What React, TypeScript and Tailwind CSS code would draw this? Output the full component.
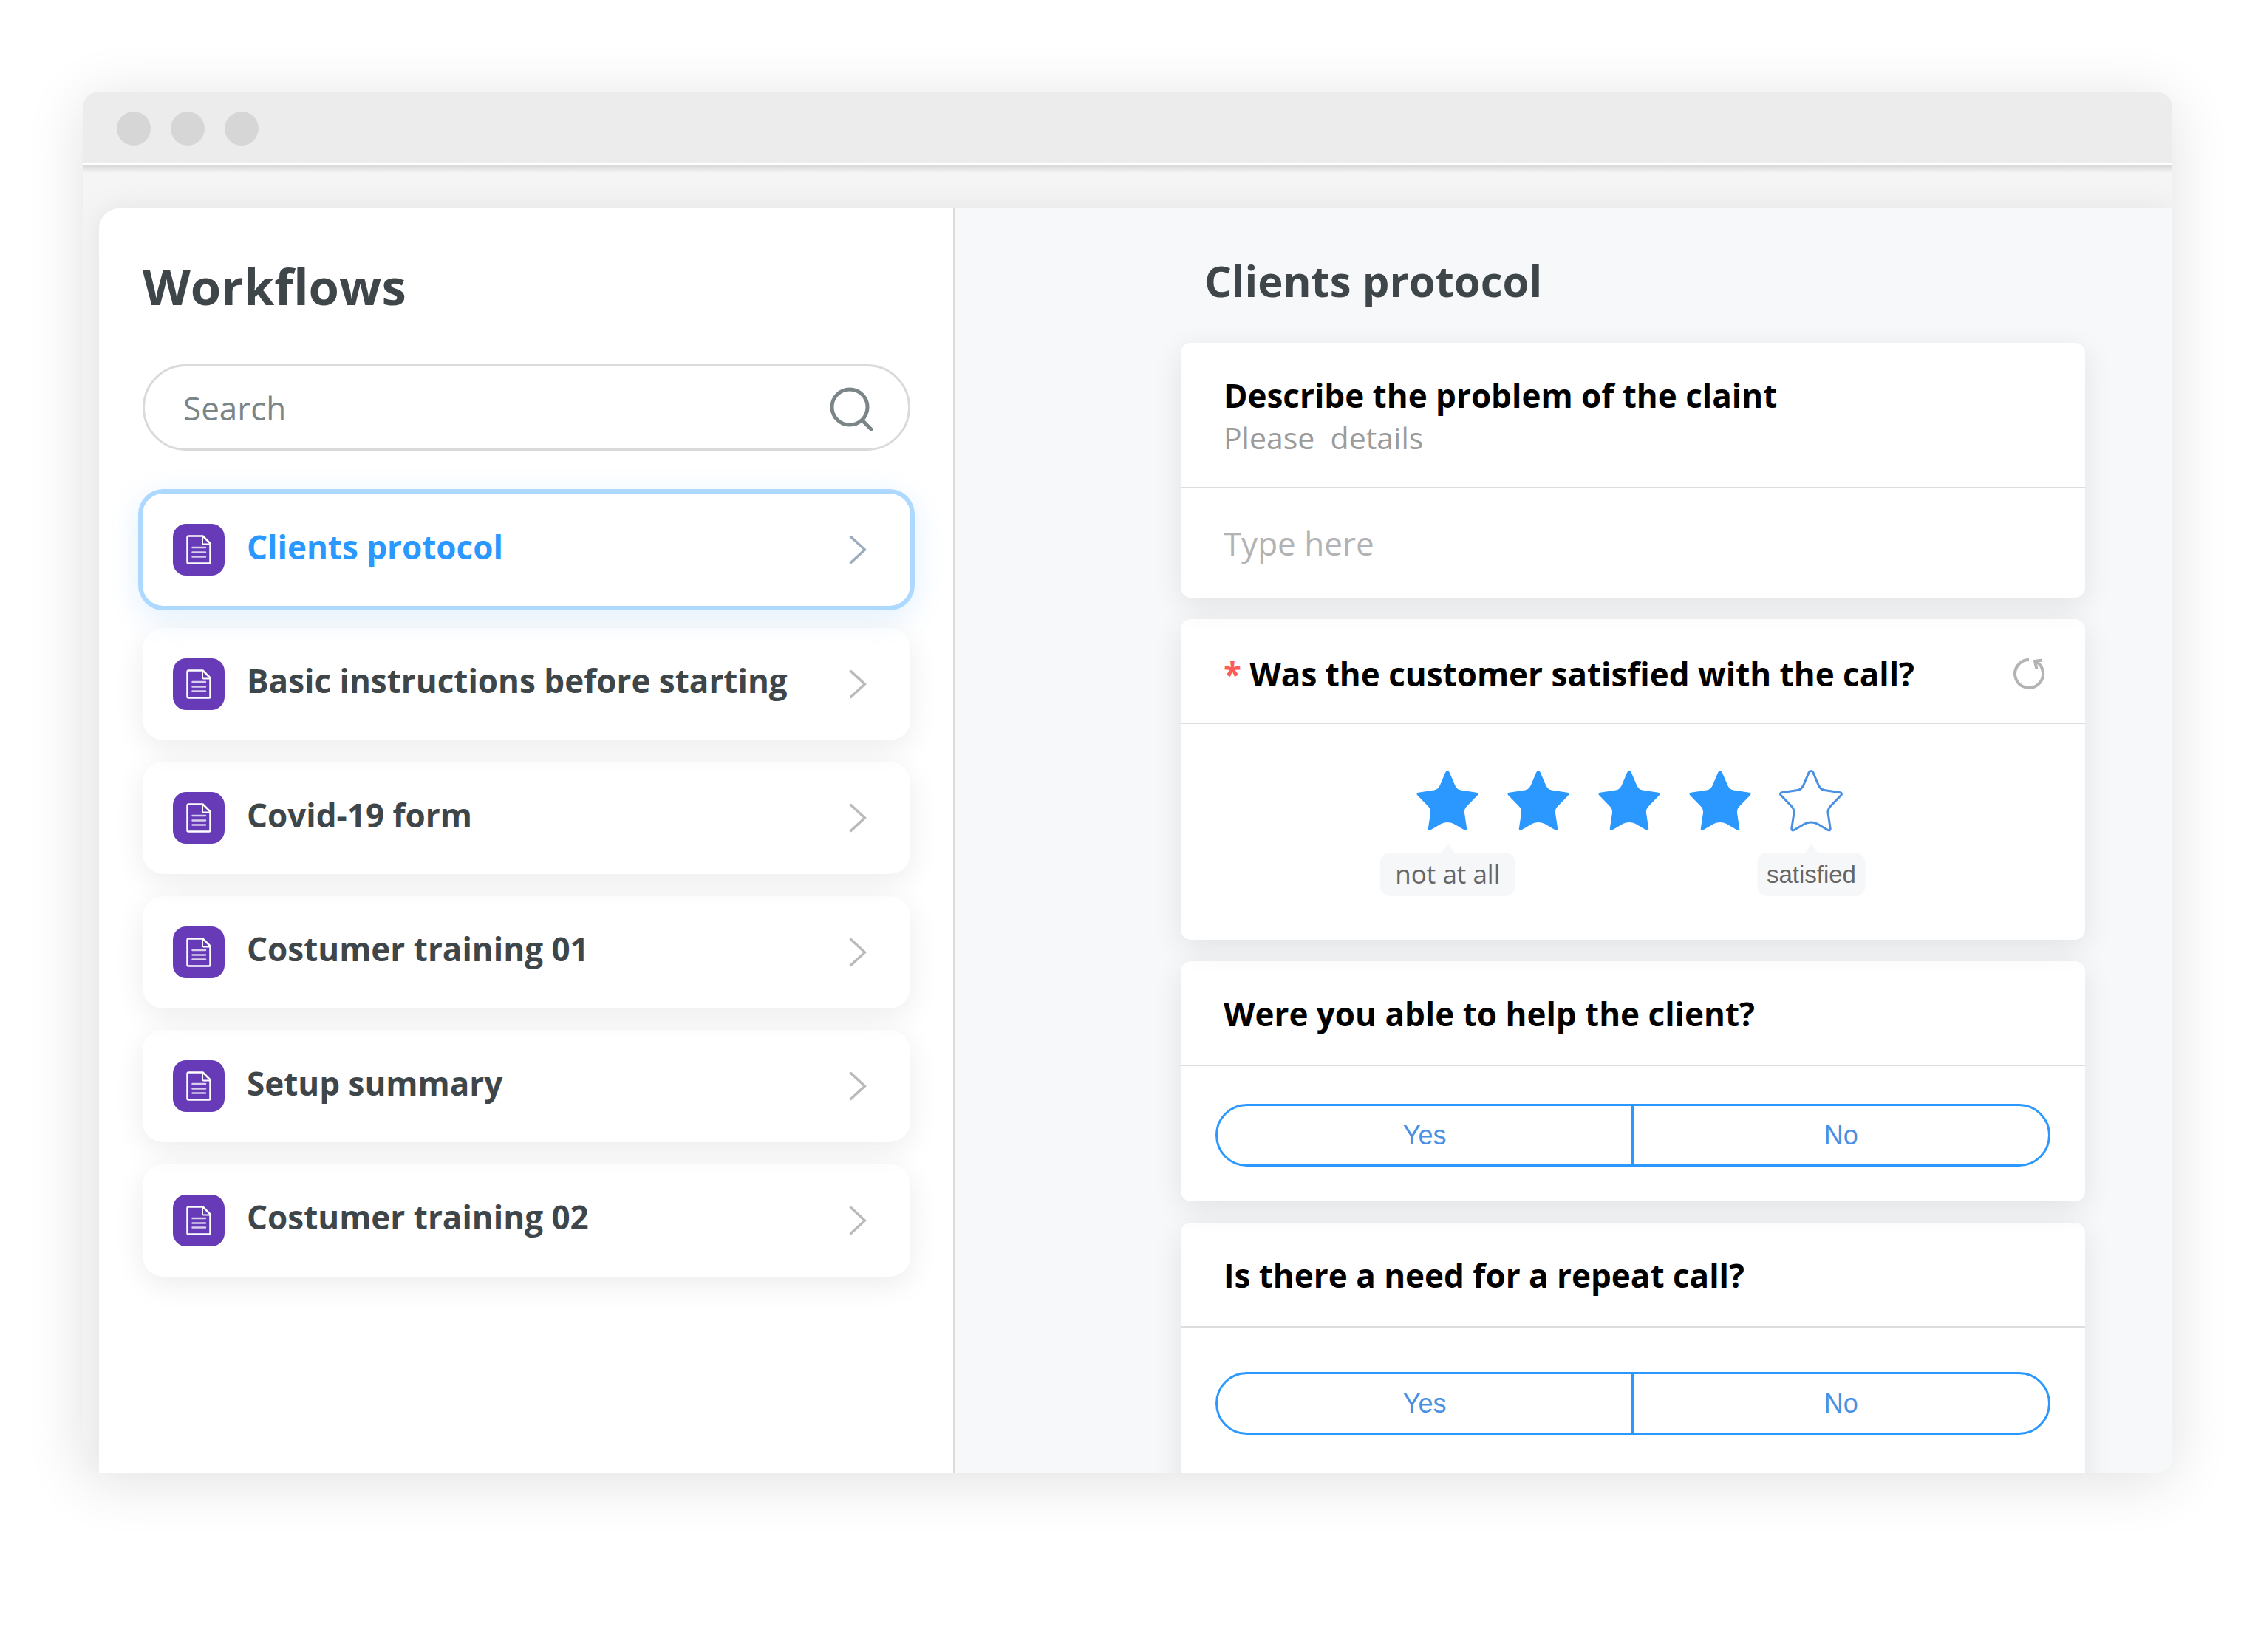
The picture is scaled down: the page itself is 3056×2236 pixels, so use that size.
import { useState } from "react";
import type { ReactNode } from "react";

const workflows = [
  "Clients protocol",
  "Basic instructions before starting",
  "Covid-19 form",
  "Costumer training 01",
  "Setup summary",
  "Costumer training 02",
];

const rowLayers = ["z-[6]", "z-[5]", "z-[4]", "z-[3]", "z-[2]", "z-[1]"];

const STAR =
  "M44 1.5c1.4 0 2.2.8 2.800 2L54 20.500c2 4.200 4 6.300 8 6.900L83.500 30.700c2 .3 2.700 2 1.300 3.600L71 48.500c-3.200 3.300-4.300 5.600-4 9.800L70.200 79.500c.3 2.200-1.200 3-3.200 2L52.500 73c-5.500-2.700-11.500-2.700-17 0L21 81.500c-2 1-3.500.2-3.200-2L21 58.300c.3-4.200-.8-6.500-4-9.800L3.200 34.300c-1.400-1.600-.7-3.300 1.300-3.600L26 27.400c4-.6 6-2.700 8-6.900L41.200 3.500c.6-1.200 1.400-2 2.800-2z";

function DocumentIcon() {
  return (
    <span className="flex size-[70px] shrink-0 items-center justify-center rounded-[18px] bg-[#673ab7]">
      <svg viewBox="0 0 34 40" className="h-10 w-[34px]" fill="none" stroke="white" strokeWidth="2.500" strokeLinejoin="round" strokeLinecap="round" aria-hidden="true">
        <path d="M3 1.500h19.500L32.500 11.500V37a1.500 1.500 0 0 1-1.500 1.500H3A1.500 1.500 0 0 1 1.500 37V3A1.500 1.500 0 0 1 3 1.500z" />
        <path d="M22 2.500v8.500a1.500 1.500 0 0 0 1.500 1.500h8" strokeWidth="2" />
        <path d="M8.500 17h17.500M8.500 23.500h17.500M8.500 29.500h17.500" strokeOpacity=".75" />
      </svg>
    </span>
  );
}

function Chevron({ color }: { color: string }) {
  return (
    <svg viewBox="0 0 24 40" className={"h-10 w-6 shrink-0 " + color} fill="none" stroke="currentColor" strokeWidth="3.500" strokeLinecap="round" aria-hidden="true">
      <path d="M2.500 2.500 21.500 20 2.500 37.500" />
    </svg>
  );
}

function Card({ layer, children }: { layer: string; children: ReactNode }) {
  return (
    <section className={"relative rounded-[14px] bg-white shadow-[0_10px_40px_rgba(0,0,0,0.09)] " + layer}>
      {children}
    </section>
  );
}

function YesNo({ label }: { label: string }) {
  const [value, setValue] = useState("");
  return (
    <div role="group" aria-label={label} className="flex h-[85px] rounded-full border-[3px] border-[#2a98ff] font-['Liberation_Sans',sans-serif] text-[36px] text-[#4a90e2]">
      <button type="button" aria-pressed={value === "yes"} onClick={() => setValue("yes")} className="flex-1">
        Yes
      </button>
      <button type="button" aria-pressed={value === "no"} onClick={() => setValue("no")} className="flex-1 border-l-[3px] border-[#2a98ff]">
        No
      </button>
    </div>
  );
}

function Hint({ children, className }: { children: string; className: string }) {
  return (
    <span className={"absolute top-28 left-1/2 flex h-[59px] -translate-x-1/2 items-center justify-center rounded-[14px] bg-[#f6f7f9] whitespace-nowrap text-[#666] " + className}>
      <svg viewBox="0 0 18 12" className="absolute -top-[11px] left-1/2 h-3 w-[18px] -translate-x-1/2" fill="#f6f7f9" aria-hidden="true">
        <path d="M0 12 8 .5Q9-.5 10 .5L18 12z" />
      </svg>
      {children}
    </span>
  );
}

export default function App() {
  const [selected, setSelected] = useState(0);
  const [rating, setRating] = useState(4);

  return (
    <div className="flex h-screen flex-col bg-white pt-[124px] pr-[116px] pb-[242px] pl-28 font-['Open_Sans',sans-serif] text-[#3f4649]">
      <div className="flex min-h-0 flex-1 flex-col overflow-hidden rounded-[22px] bg-[#f5f5f5] shadow-[0_10px_80px_rgba(0,0,0,0.12)]">
        <header className="flex h-[97px] shrink-0 items-center gap-[27px] bg-[#ececec] px-[46px] pt-[3px]">
          <span className="size-[46px] rounded-full bg-[#d6d6d6]" />
          <span className="size-[46px] rounded-full bg-[#d6d6d6]" />
          <span className="size-[46px] rounded-full bg-[#d6d6d6]" />
        </header>
        <div className="h-[3px] shrink-0 bg-white" />
        <div className="h-[10px] shrink-0 bg-linear-to-b from-[#d8d8d8] to-[#f5f5f5]" />

        <div className="mt-12 ml-[22px] flex min-h-0 flex-1 overflow-hidden rounded-tl-[28px] shadow-[0_0_40px_rgba(0,0,0,0.08)]">
          <aside className="flex w-[41.3%] shrink-0 flex-col border-r-[3px] border-[#dcdcdc] bg-white pt-[59px] pr-[58px] pl-[59px]">
            <h1 className="text-[67px] leading-[92px] font-bold">Workflows</h1>
            <label className="mt-[60px] flex h-[117px] shrink-0 items-center rounded-full border-[3px] border-[#dadada] pr-[47px] pl-[52px]">
              <input type="text" placeholder="Search" aria-label="Search" className="min-w-0 flex-1 text-[44px] leading-[60px] outline-none placeholder:text-[#7b8588]" />
              <svg viewBox="0 0 60 62" className="h-[62px] w-[60px] shrink-0" fill="none" stroke="#7b8588" strokeWidth="5" strokeLinecap="round" aria-hidden="true">
                <circle cx="28" cy="30" r="24" />
                <path d="m46 49 11 11" />
              </svg>
            </label>
            <ul className="mt-[58px] flex h-[1060px] shrink-0 flex-col justify-between">
              {workflows.map((name, i) => (
                <li key={name} className={"relative " + rowLayers[i]}>
                  <button
                    type="button"
                    aria-pressed={i === selected}
                    onClick={() => setSelected(i)}
                    className={
                      "flex h-[152px] w-full items-center gap-[30px] rounded-[28px] bg-white pr-[59px] pl-[41px] text-left text-[44px] leading-[60px] font-bold " +
                      (i === selected
                        ? "text-[#2a98ff] shadow-[0_0_0_6px_#add8ff,0_10px_40px_6px_rgba(42,152,255,0.14)]"
                        : "shadow-[0_10px_40px_rgba(0,0,0,0.08)]")
                    }
                  >
                    <DocumentIcon />
                    <span className="flex-1 pb-[9px]">{name}</span>
                    <Chevron color={i === selected ? "text-[#9badbc]" : "text-[#b8babb]"} />
                  </button>
                </li>
              ))}
            </ul>
          </aside>

          <main className="min-w-0 flex-1 bg-[#f6f8fa] pt-[58px] pr-[118px] pl-[305px]">
            <h2 className="pl-8 text-[58px] leading-[80px] font-bold">Clients protocol</h2>
            <div className="mt-11 flex flex-col gap-[29px]">
              <Card layer="z-[4]">
                <div className="h-[197px] border-b-2 border-[#dcdddf] px-[58px] pt-[41px]">
                  <h3 className="text-[44px] leading-[60px] font-bold text-black">Describe the problem of the claint</h3>
                  <p className="text-[41px] leading-[54px] whitespace-pre text-[#9b9b9b]">Please  details</p>
                </div>
                <div className="flex h-[148px] items-center px-[58px]">
                  <input type="text" placeholder="Type here" aria-label="Describe the problem of the claint" className="w-full text-[44px] leading-[60px] outline-none placeholder:text-[#b3b3b3]" />
                </div>
              </Card>

              <Card layer="z-[3]">
                <div className="flex h-[142px] items-center justify-between border-b-2 border-[#dcdddf] pt-[7px] pr-[54px] pl-[58px]">
                  <h3 className="text-[44px] leading-[60px] font-bold text-black">
                    <span className="text-[#ff5a5a]">*</span> Was the customer satisfied with the call?
                  </h3>
                  <button type="button" aria-label="Reset rating" onClick={() => setRating(0)}>
                    <svg viewBox="0 0 44 44" className="size-11" fill="none" stroke="#b3b3b3" strokeWidth="4" aria-hidden="true">
                      <path d="M22 3A19 19 0 1 0 31.500 5.500" />
                      <path d="M40 3.500 30 5l2.500 10.500" />
                    </svg>
                  </button>
                </div>
                <div className="flex h-[292px] items-start justify-center gap-[35px] pt-[62px] pr-[9px]">
                  {[1, 2, 3, 4, 5].map((n) => (
                    <div key={n} className="relative">
                      <button type="button" aria-label={"Rate " + n} aria-pressed={n <= rating} onClick={() => setRating(n)} className="block">
                        <svg viewBox="0 0 88 84" className="h-[84px] w-[88px]" fill={n <= rating ? "#2a98ff" : "none"} stroke={n <= rating ? "none" : "#4a90e2"} strokeWidth="3" aria-hidden="true">
                          <path d={STAR} />
                        </svg>
                      </button>
                      {n === 1 && <Hint className="px-5 text-[35px]">not at all</Hint>}
                      {n === 5 && <Hint className="px-3 font-['Liberation_Sans',sans-serif] text-[33px]">satisfied</Hint>}
                    </div>
                  ))}
                </div>
              </Card>

              <Card layer="z-[2]">
                <h3 className="flex h-[142px] items-center border-b-2 border-[#dcdddf] px-[58px] pt-0.5 text-[44px] leading-[60px] font-bold text-black">
                  Were you able to help the client?
                </h3>
                <div className="px-[47px] pt-[51px] pb-[47px]">
                  <YesNo label="Were you able to help the client?" />
                </div>
              </Card>

              <Card layer="z-[1]">
                <h3 className="flex h-[142px] items-center border-b-2 border-[#dcdddf] px-[58px] pt-0.5 text-[44px] leading-[60px] font-bold text-black">
                  Is there a need for a repeat call?
                </h3>
                <div className="px-[47px] pt-[60px] pb-[90px]">
                  <YesNo label="Is there a need for a repeat call?" />
                </div>
              </Card>
            </div>
          </main>
        </div>
      </div>
    </div>
  );
}
